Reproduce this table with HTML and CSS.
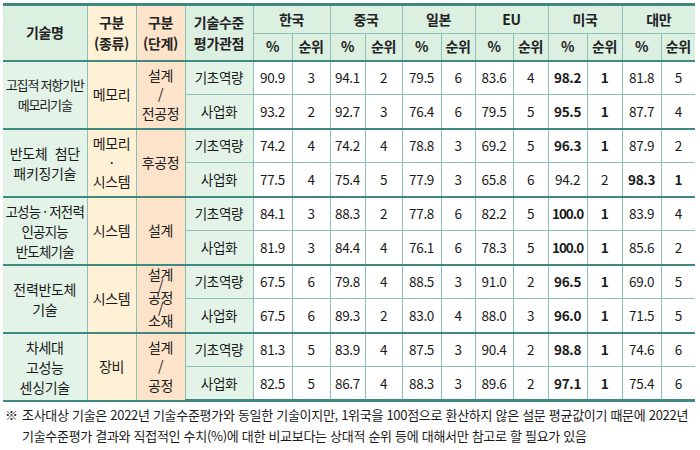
FILE: index.html
```html
<!DOCTYPE html>
<html lang="ko">
<head>
<meta charset="utf-8">
<link rel="stylesheet" href="styles.css">
</head>
<body>
<div class="page">
<table class="tbl">
<colgroup>
<col class="c-name"><col class="c-kind"><col class="c-stage"><col class="c-view">
<col class="c39"><col class="c38"><col class="c35"><col class="c37"><col class="c39"><col class="c34"><col class="c38"><col class="c35"><col class="c39"><col class="c35"><col class="c39"><col class="c34">
</colgroup>
<thead>
<tr class="h1">
<th rowspan="2">기술명</th>
<th rowspan="2" class="kind">구분<br>(종류)</th>
<th rowspan="2" class="stage">구분<br>(단계)</th>
<th rowspan="2">기술수준<br>평가관점</th>
<th colspan="2">한국</th>
<th colspan="2">중국</th>
<th colspan="2">일본</th>
<th colspan="2">EU</th>
<th colspan="2">미국</th>
<th colspan="2">대만</th>
</tr>
<tr class="h2">
<th>%</th><th>순위</th><th>%</th><th>순위</th><th>%</th><th>순위</th><th>%</th><th>순위</th><th>%</th><th>순위</th><th>%</th><th>순위</th>
</tr>
</thead>
<tbody>
<tr class="top">
<td rowspan="2" class="name sm">고집적 저항기반<br>메모리기술</td>
<td rowspan="2" class="kind">메모리</td>
<td rowspan="2" class="stage">설계<br>/<br>전공정</td>
<td class="view">기초역량</td>
<td>90.9</td><td>3</td><td>94.1</td><td>2</td><td>79.5</td><td>6</td><td>83.6</td><td>4</td><td class="b">98.2</td><td class="b">1</td><td>81.8</td><td>5</td>
</tr>
<tr class="bot">
<td class="view">사업화</td>
<td>93.2</td><td>2</td><td>92.7</td><td>3</td><td>76.4</td><td>6</td><td>79.5</td><td>5</td><td class="b">95.5</td><td class="b">1</td><td>87.7</td><td>4</td>
</tr>
<tr class="top">
<td rowspan="2" class="name">반도체&nbsp; 첨단<br>패키징기술</td>
<td rowspan="2" class="kind">메모리<br>·<br>시스템</td>
<td rowspan="2" class="stage">후공정</td>
<td class="view">기초역량</td>
<td>74.2</td><td>4</td><td>74.2</td><td>4</td><td>78.8</td><td>3</td><td>69.2</td><td>5</td><td class="b">96.3</td><td class="b">1</td><td>87.9</td><td>2</td>
</tr>
<tr class="bot">
<td class="view">사업화</td>
<td>77.5</td><td>4</td><td>75.4</td><td>5</td><td>77.9</td><td>3</td><td>65.8</td><td>6</td><td>94.2</td><td>2</td><td class="b">98.3</td><td class="b">1</td>
</tr>
<tr class="top">
<td rowspan="2" class="name sm2">고성능 · 저전력<br>인공지능<br>반도체기술</td>
<td rowspan="2" class="kind">시스템</td>
<td rowspan="2" class="stage">설계</td>
<td class="view">기초역량</td>
<td>84.1</td><td>3</td><td>88.3</td><td>2</td><td>77.8</td><td>6</td><td>82.2</td><td>5</td><td class="b n">100.0</td><td class="b">1</td><td>83.9</td><td>4</td>
</tr>
<tr class="bot">
<td class="view">사업화</td>
<td>81.9</td><td>3</td><td>84.4</td><td>4</td><td>76.1</td><td>6</td><td>78.3</td><td>5</td><td class="b n">100.0</td><td class="b">1</td><td>85.6</td><td>2</td>
</tr>
<tr class="top">
<td rowspan="2" class="name">전력반도체<br>기술</td>
<td rowspan="2" class="kind">시스템</td>
<td rowspan="2" class="stage tight">설계<br>/<br>공정<br>/<br>소재</td>
<td class="view">기초역량</td>
<td>67.5</td><td>6</td><td>79.8</td><td>4</td><td>88.5</td><td>3</td><td>91.0</td><td>2</td><td class="b">96.5</td><td class="b">1</td><td>69.0</td><td>5</td>
</tr>
<tr class="bot">
<td class="view">사업화</td>
<td>67.5</td><td>6</td><td>89.3</td><td>2</td><td>83.0</td><td>4</td><td>88.0</td><td>3</td><td class="b">96.0</td><td class="b">1</td><td>71.5</td><td>5</td>
</tr>
<tr class="top">
<td rowspan="2" class="name">차세대<br>고성능<br>센싱기술</td>
<td rowspan="2" class="kind">장비</td>
<td rowspan="2" class="stage">설계<br>/<br>공정</td>
<td class="view">기초역량</td>
<td>81.3</td><td>5</td><td>83.9</td><td>4</td><td>87.5</td><td>3</td><td>90.4</td><td>2</td><td class="b">98.8</td><td class="b">1</td><td>74.6</td><td>6</td>
</tr>
<tr class="bot">
<td class="view">사업화</td>
<td>82.5</td><td>5</td><td>86.7</td><td>4</td><td>88.3</td><td>3</td><td>89.6</td><td>2</td><td class="b">97.1</td><td class="b">1</td><td>75.4</td><td>6</td>
</tr>
</tbody>
</table>
<div class="note">
<span class="mark">※</span>
<p>조사대상 기술은 2022년 기술수준평가와 동일한 기술이지만, 1위국을 100점으로 환산하지 않은 설문 평균값이기 때문에 2022년 기술수준평가 결과와 직접적인 수치(%)에 대한 비교보다는 상대적 순위 등에 대해서만 참고로 할 필요가 있음</p>
</div>
</div>
</body>
</html>
```
FILE: styles.css
```css
html, body {
  margin: 0;
  padding: 0;
  background: #ffffff;
}
body {
  font-family: "Noto Sans CJK KR", "Noto Sans", sans-serif;
  color: #1a1a1a;
}
.page {
  padding: 3px 5px 0 3px;
}
.tbl {
  width: 692px;
  table-layout: fixed;
  border-collapse: collapse;
  font-size: 13.5px;
  letter-spacing: -0.3px;
}
.c-name { width: 84px; }
.c-kind { width: 49px; }
.c-stage { width: 49px; }
.c-view { width: 68px; }
.c39 { width: 39px; }
.c38 { width: 38px; }
.c37 { width: 37px; }
.c35 { width: 35px; }
.c34 { width: 34px; }
.tbl th, .tbl td {
  border: 1px solid #8dbfb6;
  text-align: center;
  vertical-align: middle;
  padding: 0;
  line-height: 17px;
}
.tbl tr > :first-child { border-left: none; }
.tbl tr > :last-child { border-right: none; }
.tbl thead th {
  background: #dcf0e2;
  font-weight: 700;
  font-size: 14px;
  line-height: 21px;
  color: #222;
}
.tbl thead th.kind { background: #fff1d6; }
.tbl thead th.stage { background: #fde3c9; }
.tbl thead tr.h1 th { border-top: 3px solid #3f8a80; }
.tbl thead tr.h1 { height: 29px; }
.tbl thead tr.h2 { height: 27px; }
.tbl thead tr.h1 th[rowspan], .tbl thead tr.h2 th { border-bottom: 2px solid #3f8a80; }
.tbl tbody tr { height: 34px; }
.tbl tbody tr.top td { border-top: 2px solid #3f8a80; }
.tbl tbody tr.top td[rowspan] { border-bottom: 2px solid #3f8a80; }
.tbl tbody tr:last-child td { border-bottom: 3px solid #3f8a80; }
.tbl td.name, .tbl td.view {
  background: #e3f3e8;
}
.tbl td.kind { background: #fff1d6; }
.tbl td.stage { background: #fde3c9; }
.tbl td.name { line-height: 20px; font-size: 14px; white-space: nowrap; }
.tbl td.sm { letter-spacing: -1.2px; font-size: 13px; }
.tbl td.sm2 { letter-spacing: -0.8px; font-size: 13.5px; }
.tbl td.kind, .tbl td.stage { line-height: 19px; font-size: 14px; }
.tbl td.tight { line-height: 11.5px; padding-bottom: 2px; }
.tbl td.b { font-weight: 700; }
.tbl td.n { letter-spacing: -1px; }
.note {
  display: flex;
  font-size: 13px;
  line-height: 21px;
  margin-top: 2px;
  letter-spacing: -0.3px;
  color: #1a1a1a;
  padding-left: 2px;
}
.mark {
  flex: none;
  width: 17px;
}
.note p {
  margin: 0;
  width: 672px;
  word-break: keep-all;
}
```
